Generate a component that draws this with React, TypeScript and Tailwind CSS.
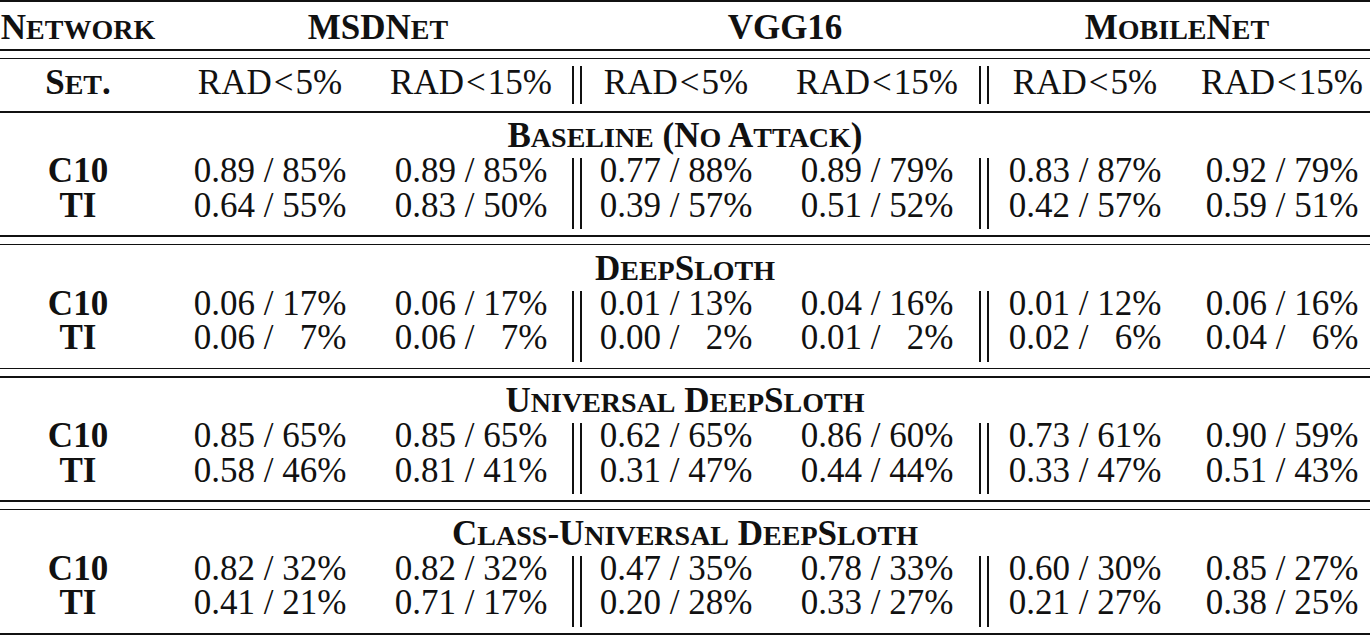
import React from "react";

const COLS =
  "grid grid-cols-[156px_228px_174px_38px_160px_221px_14px_188px_191px]";

function SC({ text }: { text: string }) {
  const runs: { small: boolean; s: string }[] = [];
  for (const ch of text) {
    const small = ch >= "a" && ch <= "z";
    const last = runs[runs.length - 1];
    if (last && last.small === small) last.s += small ? ch.toUpperCase() : ch;
    else runs.push({ small, s: small ? ch.toUpperCase() : ch });
  }
  return (
    <span className="whitespace-pre">
      {runs.map((r, i) =>
        r.small ? (
          <span key={i} className="text-[0.8em]">
            {r.s}
          </span>
        ) : (
          <span key={i}>{r.s}</span>
        )
      )}
    </span>
  );
}

function Bars({ cls = "h-full" }: { cls?: string }) {
  return (
    <div className={`flex justify-center gap-[6.5px] ${cls}`}>
      <div className="w-[1.5px] h-full bg-[#111]" />
      <div className="w-[1.5px] h-full bg-[#111]" />
    </div>
  );
}

function Line({ h = "h-[1.5px]" }: { h?: string }) {
  return <div className={`w-full ${h} bg-[#111]`} />;
}

function DoubleLine() {
  return (
    <div className="flex flex-col gap-[7px]">
      <Line />
      <Line />
    </div>
  );
}

function Rad({ n }: { n: string }) {
  return (
    <span className="whitespace-pre">
      RAD<span className="mx-[2px]">&lt;</span>
      {n}%
    </span>
  );
}

type Row = { label: string; v: string[] };

function DataBlock({ rows }: { rows: Row[] }) {
  const cells: React.ReactNode[] = [];
  rows.forEach((row, r) => {
    cells.push(
      <div key={`l${r}`} className="col-start-1 text-center font-bold" style={{ gridRow: r + 1 }}>
        {row.label}
      </div>
    );
    const cols = [2, 3, 5, 6, 8, 9];
    row.v.forEach((v, i) => {
      const pad = i === 3 ? "pl-[21px]" : i === 5 ? "pl-[15px]" : "";
      cells.push(
        <div
          key={`v${r}-${i}`}
          className={`text-center whitespace-pre ${pad}`}
          style={{ gridRow: r + 1, gridColumn: cols[i] }}
        >
          {v}
        </div>
      );
    });
  });
  return (
    <div className={`${COLS} grid-rows-[34.5px_34.5px] leading-[34.5px]`}>
      {cells}
      <div className="col-start-4 row-start-1 row-span-2 mt-[4px] h-[71px]">
        <Bars />
      </div>
      <div className="col-start-7 row-start-1 row-span-2 mt-[4px] h-[71px]">
        <Bars />
      </div>
    </div>
  );
}

const F = "\u2007";

const sections: { title: string; rows: Row[] }[] = [
  {
    title: "Baseline (No Attack)",
    rows: [
      {
        label: "C10",
        v: ["0.89 / 85%", "0.89 / 85%", "0.77 / 88%", "0.89 / 79%", "0.83 / 87%", "0.92 / 79%"],
      },
      {
        label: "TI",
        v: ["0.64 / 55%", "0.83 / 50%", "0.39 / 57%", "0.51 / 52%", "0.42 / 57%", "0.59 / 51%"],
      },
    ],
  },
  {
    title: "DeepSloth",
    rows: [
      {
        label: "C10",
        v: ["0.06 / 17%", "0.06 / 17%", "0.01 / 13%", "0.04 / 16%", "0.01 / 12%", "0.06 / 16%"],
      },
      {
        label: "TI",
        v: [
          `0.06 / ${F}7%`,
          `0.06 / ${F}7%`,
          `0.00 / ${F}2%`,
          `0.01 / ${F}2%`,
          `0.02 / ${F}6%`,
          `0.04 / ${F}6%`,
        ],
      },
    ],
  },
  {
    title: "Universal DeepSloth",
    rows: [
      {
        label: "C10",
        v: ["0.85 / 65%", "0.85 / 65%", "0.62 / 65%", "0.86 / 60%", "0.73 / 61%", "0.90 / 59%"],
      },
      {
        label: "TI",
        v: ["0.58 / 46%", "0.81 / 41%", "0.31 / 47%", "0.44 / 44%", "0.33 / 47%", "0.51 / 43%"],
      },
    ],
  },
  {
    title: "Class-Universal DeepSloth",
    rows: [
      {
        label: "C10",
        v: ["0.82 / 32%", "0.82 / 32%", "0.47 / 35%", "0.78 / 33%", "0.60 / 30%", "0.85 / 27%"],
      },
      {
        label: "TI",
        v: ["0.41 / 21%", "0.71 / 17%", "0.20 / 28%", "0.33 / 27%", "0.21 / 27%", "0.38 / 25%"],
      },
    ],
  },
];

function Section({ title, rows }: { title: string; rows: Row[] }) {
  return (
    <div className="flex flex-col h-[122.5px]">
      <div className="h-[41.5px] pt-[6.5px] leading-[34.5px] text-center font-bold">
        <SC text={title} />
      </div>
      <DataBlock rows={rows} />
    </div>
  );
}

export default function App() {
  return (
    <div className="w-[1370px] h-[637px] bg-white text-[#111] text-[35px] font-['Liberation_Serif',serif] overflow-hidden">
      <Line h="h-[2px]" />
      <div className={`${COLS} h-[47px] pt-[8.5px] leading-[34.5px] font-bold`}>
        <div className="text-center">
          <SC text="Network" />
        </div>
        <div className="col-span-3 text-center pl-[4px]">
          <SC text="MSDNet" />
        </div>
        <div className="col-span-2 text-center pr-[3px]">VGG16</div>
        <div />
        <div className="col-span-2 text-center pr-[7px]">
          <SC text="MobileNet" />
        </div>
      </div>
      <DoubleLine />
      <div className={`${COLS} h-[52px] leading-[34.5px]`}>
        <div className="pt-[6.5px] text-center font-bold">
          <SC text="Set." />
        </div>
        <div className="pt-[6.5px] text-center">
          <Rad n="5" />
        </div>
        <div className="pt-[6.5px] text-center">
          <Rad n="15" />
        </div>
        <div className="pt-[7px]">
          <Bars cls="h-[38px]" />
        </div>
        <div className="pt-[6.5px] text-center">
          <Rad n="5" />
        </div>
        <div className="pt-[6.5px] text-center pl-[21px]">
          <Rad n="15" />
        </div>
        <div className="pt-[7px]">
          <Bars cls="h-[38px]" />
        </div>
        <div className="pt-[6.5px] text-center">
          <Rad n="5" />
        </div>
        <div className="pt-[6.5px] text-center pl-[15px]">
          <Rad n="15" />
        </div>
      </div>
      <Line />
      {sections.map((s, i) => (
        <React.Fragment key={i}>
          {i > 0 && <DoubleLine />}
          <Section title={s.title} rows={s.rows} />
        </React.Fragment>
      ))}
      <Line h="h-[2px]" />
    </div>
  );
}
